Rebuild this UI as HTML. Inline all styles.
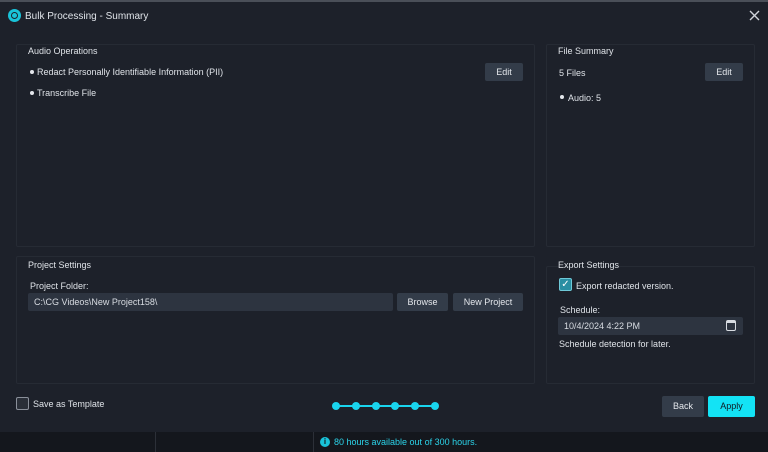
<!DOCTYPE html>
<html><head><style>
*{box-sizing:border-box;margin:0;padding:0}
body{width:768px;height:452px;background:#1d212a;font-family:"Liberation Sans",sans-serif;color:#e4e7ec;font-size:9px;position:relative;overflow:hidden}
.a{position:absolute}
.panel{position:absolute;border:1px solid #262b34;border-radius:2px}
.t{position:absolute;font-size:9px;color:#dfe3e8}
.btn{position:absolute;background:#333c49;color:#e4e7ec;border-radius:2px;text-align:center;font-size:9px}
.dot{position:absolute;width:4px;height:4px;border-radius:50%;background:#e4e7ec}
.in{position:absolute;background:#2d3440;border-radius:2px;color:#d8dce2;font-size:9px}
</style></head><body>
<div class="a" style="left:0;top:0;width:768px;height:2px;background:#4a4f58"></div>
<div class="a" style="left:8px;top:9px;width:13px;height:13px;border-radius:50%;background:#19c3d9"></div>
<div class="a" style="left:11px;top:12px;width:7px;height:7px;border:1.5px solid #1d212a;border-radius:50%"></div>
<div class="t" style="left:25px;top:11px;font-size:10px">Bulk Processing - Summary</div>
<svg class="a" style="left:749px;top:10px" width="11" height="11" viewBox="0 0 11 11"><path d="M1 1L10 10M10 1L1 10" stroke="#d0d4da" stroke-width="1.4"/></svg>

<div class="panel" style="left:16px;top:44px;width:519px;height:203px"></div>
<div class="t" style="left:28px;top:46px">Audio Operations</div>
<div class="dot" style="left:30px;top:70px"></div>
<div class="t" style="left:37px;top:67px">Redact Personally Identifiable Information (PII)</div>
<div class="dot" style="left:30px;top:91px"></div>
<div class="t" style="left:37px;top:88px">Transcribe File</div>
<div class="btn" style="left:485px;top:63px;width:38px;height:18px;line-height:18px">Edit</div>

<div class="panel" style="left:546px;top:44px;width:209px;height:203px"></div>
<div class="t" style="left:558px;top:46px">File Summary</div>
<div class="t" style="left:559px;top:68px">5 Files</div>
<div class="btn" style="left:705px;top:63px;width:38px;height:18px;line-height:18px">Edit</div>
<div class="dot" style="left:560px;top:95px"></div>
<div class="t" style="left:568px;top:93px">Audio: 5</div>

<div class="panel" style="left:16px;top:256px;width:519px;height:128px"></div>
<div class="t" style="left:28px;top:260px">Project Settings</div>
<div class="t" style="left:30px;top:281px">Project Folder:</div>
<div class="in" style="left:28px;top:293px;width:365px;height:18px;line-height:18px;padding-left:6px">C:\CG Videos\New Project158\</div>
<div class="btn" style="left:397px;top:293px;width:51px;height:18px;line-height:18px">Browse</div>
<div class="btn" style="left:453px;top:293px;width:70px;height:18px;line-height:18px">New Project</div>

<div class="panel" style="left:546px;top:266px;width:209px;height:118px"></div>
<div class="t" style="left:558px;top:260px">Export Settings</div>
<div class="a" style="left:559px;top:278px;width:13px;height:13px;background:#2a8fa3;border:1px solid #6fc9d8;border-radius:2px;color:#fff;font-size:10px;line-height:11px;text-align:center">✓</div>
<div class="t" style="left:576px;top:281px">Export redacted version.</div>
<div class="t" style="left:560px;top:305px">Schedule:</div>
<div class="in" style="left:558px;top:317px;width:185px;height:18px;line-height:18px;padding-left:6px">10/4/2024 4:22 PM</div>
<div class="a" style="left:726px;top:320px;width:10px;height:11px;border:1.5px solid #d8dce2;border-radius:2px;border-top-width:3px"></div>
<div class="t" style="left:559px;top:339px">Schedule detection for later.</div>

<div class="a" style="left:16px;top:397px;width:13px;height:13px;border:1px solid #8a909a;border-radius:2px;background:#2a2f38"></div>
<div class="t" style="left:33px;top:399px">Save as Template</div>
<div class="a" style="left:336px;top:405px;width:99px;height:2px;background:#19d5ee"></div>
<div class="a" style="left:332px;top:402px;width:8px;height:8px;border-radius:50%;background:#19d5ee"></div>
<div class="a" style="left:352px;top:402px;width:8px;height:8px;border-radius:50%;background:#19d5ee"></div>
<div class="a" style="left:372px;top:402px;width:8px;height:8px;border-radius:50%;background:#19d5ee"></div>
<div class="a" style="left:391px;top:402px;width:8px;height:8px;border-radius:50%;background:#19d5ee"></div>
<div class="a" style="left:411px;top:402px;width:8px;height:8px;border-radius:50%;background:#19d5ee"></div>
<div class="a" style="left:431px;top:402px;width:8px;height:8px;border-radius:50%;background:#19d5ee"></div>
<div class="btn" style="left:662px;top:396px;width:42px;height:21px;line-height:21px">Back</div>
<div class="btn" style="left:708px;top:396px;width:47px;height:21px;line-height:21px;background:#13e3f5;color:#0f1a22">Apply</div>

<div class="a" style="left:0;top:432px;width:768px;height:20px;background:#14171d"></div>
<div class="a" style="left:155px;top:432px;width:1px;height:20px;background:#2c3038"></div>
<div class="a" style="left:313px;top:432px;width:1px;height:20px;background:#2c3038"></div>
<div class="a" style="left:320px;top:437px;width:10px;height:10px;border-radius:50%;background:#19c3d9;color:#14171d;font-size:8px;font-weight:bold;text-align:center;line-height:10px">i</div>
<div class="t" style="left:334px;top:437px;color:#2bd4ea">80 hours available out of 300 hours.</div>
</body></html>
